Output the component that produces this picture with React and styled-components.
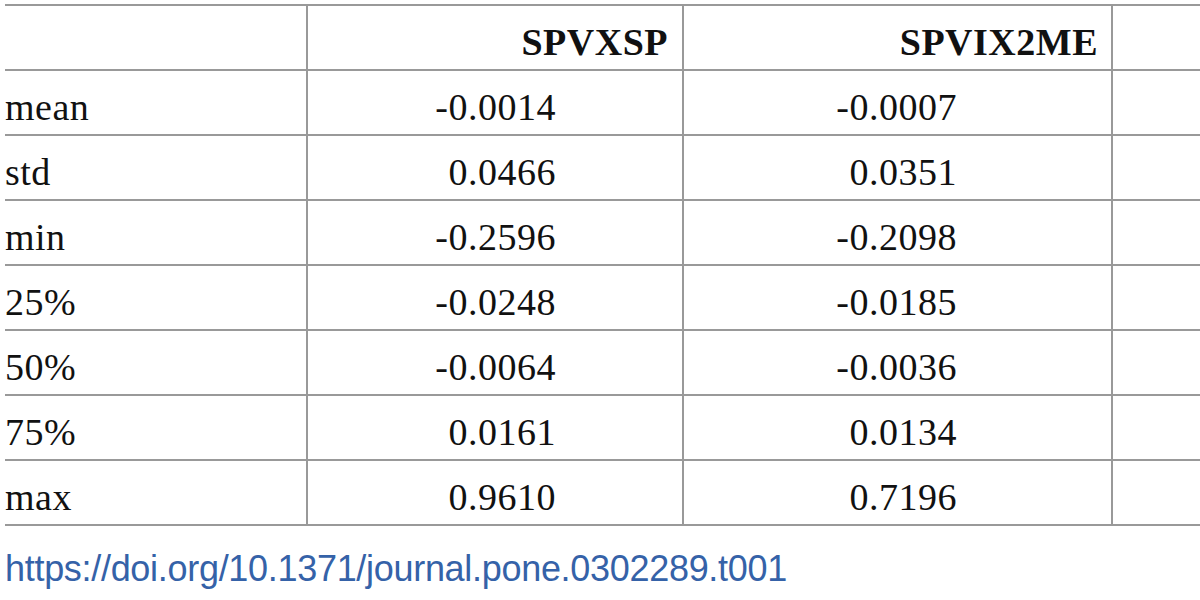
import React from 'react';
import styled, { createGlobalStyle } from 'styled-components';

const rows = [
  ['mean', '-0.0014', '-0.0007'],
  ['std', '0.0466', '0.0351'],
  ['min', '-0.2596', '-0.2098'],
  ['25%', '-0.0248', '-0.0185'],
  ['50%', '-0.0064', '-0.0036'],
  ['75%', '0.0161', '0.0134'],
  ['max', '0.9610', '0.7196'],
];

const GlobalStyle = createGlobalStyle`
  html, body {
    margin: 0;
    padding: 0;
    background: #fff;
    overflow: hidden;
  }
`;

const Page = styled.div`
  width: 1200px;
  height: 600px;
  padding: 4px 0 0 5px;
  box-sizing: border-box;
  overflow: hidden;
`;

const Table = styled.table`
  border-collapse: collapse;
  table-layout: fixed;
  width: 1260px;
  font-family: "Liberation Serif", "Times New Roman", serif;
  font-size: 38px;
  letter-spacing: 0.5px;
  color: #111;
`;

const Row = styled.tr`
  height: 65px;
  border-top: 2px solid #999;
  border-bottom: 2px solid #999;
`;

const HeadCell = styled.th`
  padding: 9px ${p => p.$pad || 0}px 0 0;
  text-align: right;
  font-weight: bold;
  border-left: ${p => (p.$first ? 'none' : '2px solid #999')};
  vertical-align: middle;
`;

const LabelCell = styled.td`
  padding: 9px 0 0 0;
  text-align: left;
  vertical-align: middle;
`;

const ValueCell = styled.td`
  padding: 9px ${p => p.$pad}px 0 0;
  text-align: right;
  border-left: 2px solid #999;
  vertical-align: middle;
`;

const Doi = styled.a`
  display: block;
  margin-top: 22px;
  font-family: "Liberation Sans", Arial, sans-serif;
  font-size: 36px;
  color: #3562a8;
  text-decoration: none;
  letter-spacing: -0.3px;
`;

export default function App() {
  return (
    <Page>
      <GlobalStyle />
      <Table>
        <colgroup>
          <col style={{ width: 302 }} />
          <col style={{ width: 376 }} />
          <col style={{ width: 429 }} />
          <col />
        </colgroup>
        <thead>
          <Row>
            <HeadCell $first />
            <HeadCell $pad={14}>SPVXSP</HeadCell>
            <HeadCell $pad={13}>SPVIX2ME</HeadCell>
            <HeadCell />
          </Row>
        </thead>
        <tbody>
          {rows.map(([label, a, b]) => (
            <Row key={label}>
              <LabelCell>{label}</LabelCell>
              <ValueCell $pad={126}>{a}</ValueCell>
              <ValueCell $pad={154}>{b}</ValueCell>
              <ValueCell $pad={0} />
            </Row>
          ))}
        </tbody>
      </Table>
      <Doi href="#">https://doi.org/10.1371/journal.pone.0302289.t001</Doi>
    </Page>
  );
}
